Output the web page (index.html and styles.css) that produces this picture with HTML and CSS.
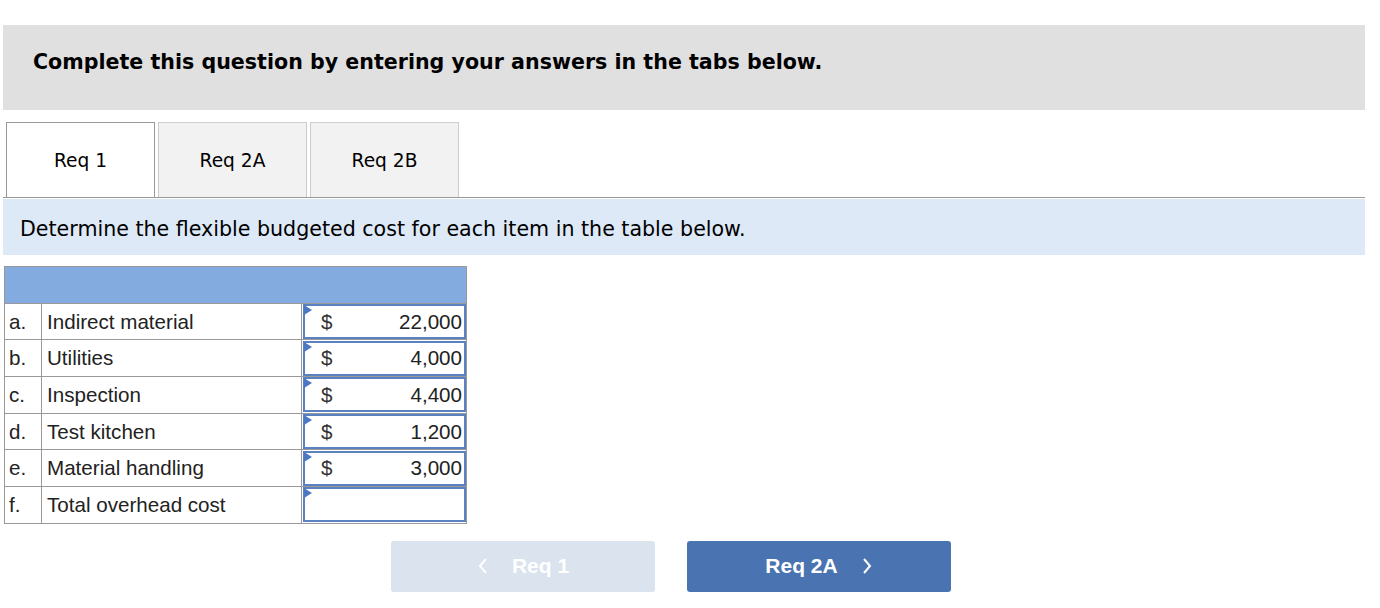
FILE: index.html
```html
<!DOCTYPE html>
<html lang="en">
<head>
    <meta charset="UTF-8">
    <title>Flexible Budget</title>
    <link rel="stylesheet" href="styles.css">
</head>
<body>
<div class="page">
    <div class="prompt">
        <h1>Complete this question by entering your answers in the tabs below.</h1>
    </div>

    <div class="tabs">
        <div class="tab active">Req 1</div>
        <div class="tab">Req 2A</div>
        <div class="tab">Req 2B</div>
    </div>

    <div class="instructions">Determine the flexible budgeted cost for each item in the table below.</div>

    <table class="budget">
        <tr class="head"><td colspan="3"></td></tr>
        <tr><td class="letter">a.</td><td class="label">Indirect material</td><td class="cell"><div class="input"><span class="cur">$</span><span>22,000</span></div></td></tr>
        <tr><td class="letter">b.</td><td class="label">Utilities</td><td class="cell"><div class="input"><span class="cur">$</span><span>4,000</span></div></td></tr>
        <tr><td class="letter">c.</td><td class="label">Inspection</td><td class="cell"><div class="input"><span class="cur">$</span><span>4,400</span></div></td></tr>
        <tr><td class="letter">d.</td><td class="label">Test kitchen</td><td class="cell"><div class="input"><span class="cur">$</span><span>1,200</span></div></td></tr>
        <tr><td class="letter">e.</td><td class="label">Material handling</td><td class="cell"><div class="input"><span class="cur">$</span><span>3,000</span></div></td></tr>
        <tr><td class="letter">f.</td><td class="label">Total overhead cost</td><td class="cell"><div class="input"></div></td></tr>
    </table>

    <div class="nav">
        <button class="prev">
            <svg width="11" height="18" viewBox="0 0 11 18"><path d="M9 2 L3 9 L9 16" fill="none" stroke="#fff" stroke-width="2"/></svg>
            Req 1
        </button>
        <button class="next">
            Req 2A
            <svg width="11" height="18" viewBox="0 0 11 18"><path d="M2 2 L8 9 L2 16" fill="none" stroke="#fff" stroke-width="2"/></svg>
        </button>
    </div>
</div>
</body>
</html>
```

FILE: styles.css
```css
body {
    margin: 0;
    background: #fff;
    color: #000;
}
.page {
    width: 1362px;
    padding: 25px 0 0 3px;
}
.prompt {
    background: #e0e0e0;
    height: 85px;
    padding: 0 30px;
    display: flex;
    align-items: center;
}
.prompt h1 {
    margin: -12px 0 0;
    font-family: "DejaVu Sans", Verdana, sans-serif;
    font-size: 20.6px;
    font-weight: bold;
}
.tabs {
    display: flex;
    gap: 3px;
    margin-top: 12px;
    padding-left: 3px;
    border-bottom: 1px solid #999;
}
.tab {
    width: 147px;
    height: 74px;
    display: flex;
    align-items: center;
    justify-content: center;
    font-family: "DejaVu Sans", Verdana, sans-serif;
    font-size: 18.6px;
    background: #f2f2f2;
    border: 1px solid #ccc;
    border-bottom: none;
}
.tab.active {
    background: #fff;
    border-color: #999;
}
.instructions {
    margin-top: 1px;
    background: #dde9f7;
    height: 56px;
    padding: 3px 0 0 17px;
    box-sizing: border-box;
    display: flex;
    align-items: center;
    font-family: "DejaVu Sans", Verdana, sans-serif;
    font-size: 20.6px;
}
.budget {
    margin: 11px 0 0 1px;
    border-collapse: collapse;
    font-family: "Liberation Sans", Arial, sans-serif;
    font-size: 20.6px;
    color: #222;
}
.budget td {
    border: 1px solid #999;
    height: 35.7px;
    padding: 0;
}
.budget .head td {
    background: #84abdf;
}
.letter {
    width: 32px;
    padding-left: 4px !important;
}
.label {
    width: 254px;
    padding-left: 5px !important;
}
.cell {
    width: 164px;
}
.input {
    margin: 0 0 0 1px;
    height: 31px;
    border: 2px solid #5b82c0;
    display: flex;
    justify-content: space-between;
    align-items: center;
    padding: 0 2px 0 16px;
    position: relative;
}
.input::before {
    content: "";
    position: absolute;
    left: -1px;
    top: -1px;
    border-top: 5px solid transparent;
    border-bottom: 5px solid transparent;
    border-left: 8px solid #4a78c2;
}
.cur {
    color: #333;
}
.nav {
    display: flex;
    gap: 32px;
    margin: 17px 0 0 388px;
}
.nav button {
    width: 264px;
    height: 51px;
    border: none;
    border-radius: 3px;
    color: #fff;
    font-family: "Liberation Sans", Arial, sans-serif;
    font-weight: bold;
    font-size: 21px;
    display: flex;
    align-items: center;
    justify-content: center;
    gap: 24px;
}
.prev {
    background: #dae3ee;
}
.next {
    background: #4a74b1;
}
```
